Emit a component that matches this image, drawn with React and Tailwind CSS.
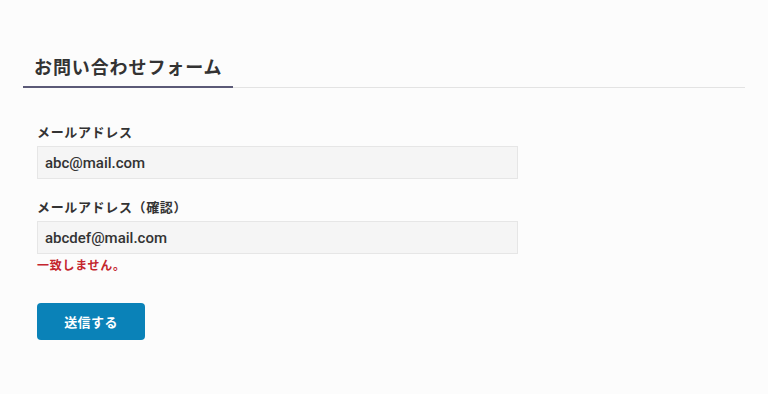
export default function App() {
    return (
        <div className="min-h-[394px] w-full bg-[#fcfcfc] font-['Noto_Sans_CJK_JP','Noto_Sans',sans-serif] text-[#333]">
            <div className="pl-[23px] pr-[23px] pt-[50px]">
                {/* Heading */}
                <div className="flex border-b border-[#e3e3e3]">
                    <h2 className="-mb-px w-[210px] border-b-2 border-[#5b5a77] pb-[3px] pl-[11px] text-[18px] font-bold leading-[33px] tracking-[0.05em]">
                        お問い合わせフォーム
                    </h2>
                </div>

                {/* Form */}
                <form className="pl-[14px] pt-[34px]" onSubmit={(e) => e.preventDefault()}>
                    <div>
                        <label className="block text-[13px] font-bold leading-[20px] tracking-[0.05em]">メールアドレス</label>
                        <input
                            type="text"
                            defaultValue="abc@mail.com"
                            className="mt-[4px] block h-[33px] w-[481px] border border-[#e6e6e6] bg-[#f5f5f5] px-[7px] font-['Roboto','Noto_Sans_CJK_JP',sans-serif] text-[15px] font-medium text-[#333] outline-none"
                        />
                    </div>

                    <div className="mt-[18px]">
                        <label className="block text-[13px] font-bold leading-[20px] tracking-[0.05em]">メールアドレス（確認）</label>
                        <input
                            type="text"
                            defaultValue="abcdef@mail.com"
                            className="mt-[4px] block h-[33px] w-[481px] border border-[#e6e6e6] bg-[#f5f5f5] px-[7px] font-['Roboto','Noto_Sans_CJK_JP',sans-serif] text-[15px] font-medium text-[#333] outline-none"
                        />
                        <p className="mt-[2px] text-[12px] font-bold leading-[18px] tracking-[0.06em] text-[#c4262e]">一致しません。</p>
                    </div>

                    <button
                        type="submit"
                        className="mt-[29px] h-[37px] w-[108px] rounded-[4px] bg-[#0a82b8] text-[13px] font-bold tracking-[0.03em] text-white"
                    >
                        送信する
                    </button>
                </form>
            </div>
        </div>
    );
}
